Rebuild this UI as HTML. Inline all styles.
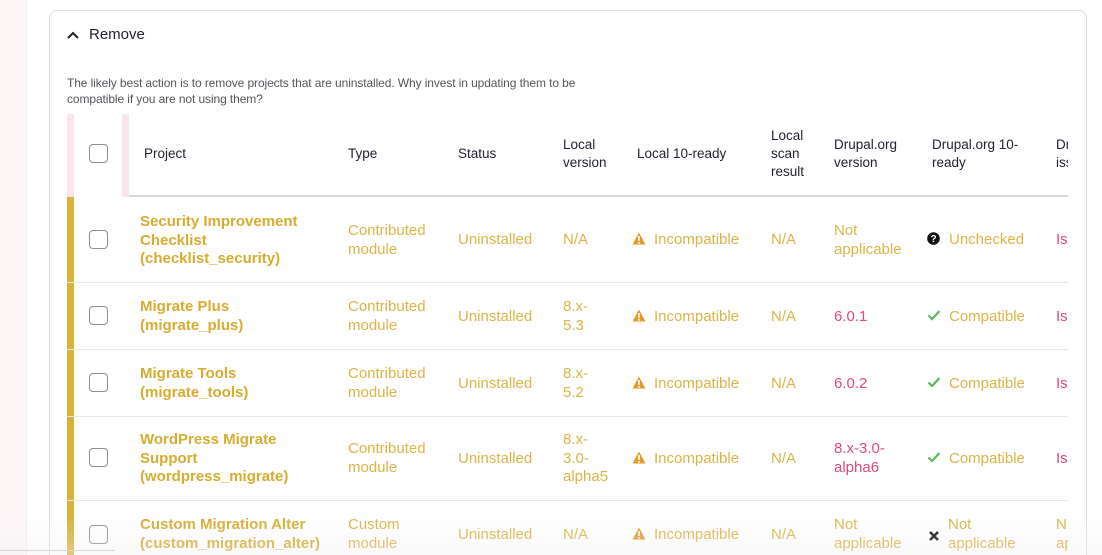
<!DOCTYPE html>
<html><head><meta charset="utf-8"><style>
*{margin:0;padding:0;box-sizing:border-box}
html,body{width:1102px;height:555px;overflow:hidden}
body{background:#fff;font-family:"Liberation Sans",Arial,sans-serif;position:relative}
.leftbg{position:absolute;left:0;top:0;width:27px;height:555px;background:#fdf7f8;border-right:1px solid #f3eef0}
.card{position:absolute;left:49px;top:10px;width:1038px;height:545px;border:1px solid #dcdcdc;border-bottom:none;border-radius:8px 8px 0 0;background:#fff}
.title{position:absolute;left:89px;top:26px;font-size:15px;color:#222330;font-weight:500}
.chev{position:absolute;left:66px;top:29px}
.desc{position:absolute;left:67px;top:75px;font-size:12px;line-height:16px;color:#55565b;width:600px;letter-spacing:-0.1px}
.tbl{position:absolute;left:67px;top:114px;width:1001px;height:441px;overflow:hidden}
.c{position:absolute;font-size:15px;line-height:18.5px;color:#dbb545;white-space:nowrap}
.h{position:absolute;font-size:13.5px;line-height:18px;color:#222330;white-space:nowrap}
.p{font-weight:bold;color:#d7ac2f}
.pk{color:#e04a7e}
.cb{position:absolute;left:22px;width:19px;height:19px;border:1.5px solid #8d8e98;border-radius:4px;background:#fff}
.hl{position:absolute;left:0;width:1001px;height:1px;background:#e6e6e6}
</style></head><body>
<div class="leftbg"></div>
<div class="card"></div>
<svg class="chev" width="14" height="12" viewBox="0 0 14 12"><path d="M2 9 L7 4 L12 9" stroke="#222" stroke-width="2" fill="none"/></svg>
<div class="title">Remove</div>
<div class="desc">The likely best action is to remove projects that are uninstalled. Why invest in updating them to be<br>compatible if you are not using them?</div>
<div class="tbl">
<div style="position:absolute;left:0;top:0;width:7px;height:83px;background:#fce4ec"></div>
<div style="position:absolute;left:55px;top:0;width:7px;height:83px;background:#fce4ec"></div>
<div style="position:absolute;left:62px;top:81px;width:939px;height:2px;background:#d8d8d8"></div>
<div style="position:absolute;left:0;top:83px;width:7px;height:358px;background:#d9b23a"></div>
<div class="cb" style="top:30px"></div>
<div class="h" style="left:77px;top:31px">Project</div>
<div class="h" style="left:281px;top:31px">Type</div>
<div class="h" style="left:391px;top:31px">Status</div>
<div class="h" style="left:496px;top:22px">Local<br>version</div>
<div class="h" style="left:570px;top:31px">Local 10-ready</div>
<div class="h" style="left:704px;top:13px">Local<br>scan<br>result</div>
<div class="h" style="left:767px;top:22px">Drupal.org<br>version</div>
<div class="h" style="left:865px;top:22px">Drupal.org 10-<br>ready</div>
<div class="h" style="left:989px;top:22px">Dr<br>iss</div>

<div class="hl" style="top:168px"></div>
<div class="hl" style="top:235px"></div>
<div class="hl" style="top:302px"></div>
<div class="hl" style="top:386px"></div>

<div class="cb" style="top:116px"></div>
<div class="c p" style="left:73px;top:99px">Security Improvement<br>Checklist<br>(checklist_security)</div>
<div class="c" style="left:281px;top:108px">Contributed<br>module</div>
<div class="c" style="left:391px;top:117px">Uninstalled</div>
<div class="c" style="left:496px;top:117px">N/A</div>
<div class="c" style="left:565px;top:117px"><svg width="14" height="13" viewBox="0 0 14 13" style="vertical-align:-1px;margin-right:8px"><path d="M7 0.5 L13.5 12.5 H0.5Z" fill="#e39c2c"/><rect x="6.2" y="4" width="1.6" height="5" fill="#fff"/><rect x="6.2" y="10" width="1.6" height="1.6" fill="#fff"/></svg>Incompatible</div>
<div class="c" style="left:704px;top:117px">N/A</div>
<div class="c" style="left:767px;top:108px">Not<br>applicable</div>
<div class="c" style="left:860px;top:117px"><svg width="13" height="13" viewBox="0 0 13 13" style="vertical-align:-1px;margin-right:9px"><circle cx="6.5" cy="6.5" r="6.3" fill="#111"/><text x="6.5" y="10.2" font-size="10" font-weight="bold" fill="#fff" text-anchor="middle" font-family="Liberation Sans">?</text></svg>Unchecked</div>
<div class="c pk" style="left:989px;top:117px">Is</div>

<div class="cb" style="top:192px"></div>
<div class="c p" style="left:73px;top:184px">Migrate Plus<br>(migrate_plus)</div>
<div class="c" style="left:281px;top:184px">Contributed<br>module</div>
<div class="c" style="left:391px;top:194px">Uninstalled</div>
<div class="c" style="left:496px;top:184px">8.x-<br>5.3</div>
<div class="c" style="left:565px;top:194px"><svg width="14" height="13" viewBox="0 0 14 13" style="vertical-align:-1px;margin-right:8px"><path d="M7 0.5 L13.5 12.5 H0.5Z" fill="#e39c2c"/><rect x="6.2" y="4" width="1.6" height="5" fill="#fff"/><rect x="6.2" y="10" width="1.6" height="1.6" fill="#fff"/></svg>Incompatible</div>
<div class="c" style="left:704px;top:194px">N/A</div>
<div class="c pk" style="left:767px;top:194px">6.0.1</div>
<div class="c" style="left:860px;top:194px"><svg width="14" height="12" viewBox="0 0 14 12" style="vertical-align:0;margin-right:8px"><path d="M1.5 6.5 L5 10 L12.5 2" stroke="#5cb85c" stroke-width="2.2" fill="none"/></svg>Compatible</div>
<div class="c pk" style="left:989px;top:194px">Is</div>

<div class="cb" style="top:259px"></div>
<div class="c p" style="left:73px;top:251px">Migrate Tools<br>(migrate_tools)</div>
<div class="c" style="left:281px;top:251px">Contributed<br>module</div>
<div class="c" style="left:391px;top:261px">Uninstalled</div>
<div class="c" style="left:496px;top:251px">8.x-<br>5.2</div>
<div class="c" style="left:565px;top:261px"><svg width="14" height="13" viewBox="0 0 14 13" style="vertical-align:-1px;margin-right:8px"><path d="M7 0.5 L13.5 12.5 H0.5Z" fill="#e39c2c"/><rect x="6.2" y="4" width="1.6" height="5" fill="#fff"/><rect x="6.2" y="10" width="1.6" height="1.6" fill="#fff"/></svg>Incompatible</div>
<div class="c" style="left:704px;top:261px">N/A</div>
<div class="c pk" style="left:767px;top:261px">6.0.2</div>
<div class="c" style="left:860px;top:261px"><svg width="14" height="12" viewBox="0 0 14 12" style="vertical-align:0;margin-right:8px"><path d="M1.5 6.5 L5 10 L12.5 2" stroke="#5cb85c" stroke-width="2.2" fill="none"/></svg>Compatible</div>
<div class="c pk" style="left:989px;top:261px">Is</div>

<div class="cb" style="top:334px"></div>
<div class="c p" style="left:73px;top:317px">WordPress Migrate<br>Support<br>(wordpress_migrate)</div>
<div class="c" style="left:281px;top:326px">Contributed<br>module</div>
<div class="c" style="left:391px;top:336px">Uninstalled</div>
<div class="c" style="left:496px;top:317px">8.x-<br>3.0-<br>alpha5</div>
<div class="c" style="left:565px;top:336px"><svg width="14" height="13" viewBox="0 0 14 13" style="vertical-align:-1px;margin-right:8px"><path d="M7 0.5 L13.5 12.5 H0.5Z" fill="#e39c2c"/><rect x="6.2" y="4" width="1.6" height="5" fill="#fff"/><rect x="6.2" y="10" width="1.6" height="1.6" fill="#fff"/></svg>Incompatible</div>
<div class="c" style="left:704px;top:336px">N/A</div>
<div class="c pk" style="left:767px;top:326px">8.x-3.0-<br>alpha6</div>
<div class="c" style="left:860px;top:336px"><svg width="14" height="12" viewBox="0 0 14 12" style="vertical-align:0;margin-right:8px"><path d="M1.5 6.5 L5 10 L12.5 2" stroke="#5cb85c" stroke-width="2.2" fill="none"/></svg>Compatible</div>
<div class="c pk" style="left:989px;top:336px">Is</div>

<div class="cb" style="top:411px"></div>
<div class="c p" style="left:73px;top:402px">Custom Migration Alter<br>(custom_migration_alter)</div>
<div class="c" style="left:281px;top:402px">Custom<br>module</div>
<div class="c" style="left:391px;top:412px">Uninstalled</div>
<div class="c" style="left:496px;top:412px">N/A</div>
<div class="c" style="left:565px;top:412px"><svg width="14" height="13" viewBox="0 0 14 13" style="vertical-align:-1px;margin-right:8px"><path d="M7 0.5 L13.5 12.5 H0.5Z" fill="#e39c2c"/><rect x="6.2" y="4" width="1.6" height="5" fill="#fff"/><rect x="6.2" y="10" width="1.6" height="1.6" fill="#fff"/></svg>Incompatible</div>
<div class="c" style="left:704px;top:412px">N/A</div>
<div class="c" style="left:767px;top:402px">Not<br>applicable</div>
<div class="c" style="left:861px;top:415px"><svg width="12" height="12" viewBox="0 0 12 12"><path d="M2 2 L10 10 M10 2 L2 10" stroke="#111" stroke-width="2.6"/></svg></div>
<div class="c" style="left:881px;top:402px">Not<br>applicable</div>
<div class="c" style="left:989px;top:402px">N<br>ap</div>
</div>
<div style="position:absolute;left:0;top:515px;width:1102px;height:40px;background:linear-gradient(rgba(245,245,245,0),rgba(240,240,240,0.35))"></div>
<div style="position:absolute;left:0;top:550px;width:115px;height:1px;background:#d8d8d8"></div>
</body></html>
